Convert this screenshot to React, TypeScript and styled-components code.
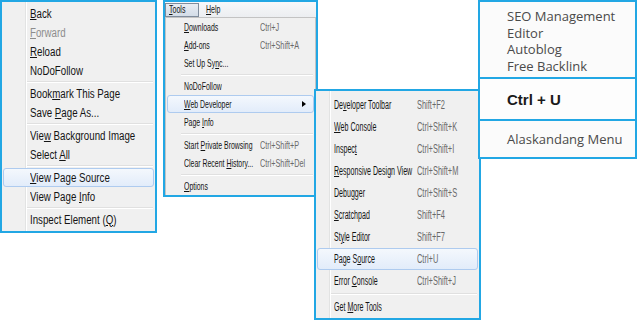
import React from 'react';
import styled, { createGlobalStyle, css } from 'styled-components';

const BLUE = '#22a7e4';

const Global = createGlobalStyle`
  html, body { margin: 0; padding: 0; background: #fff; }
  body { font-family: "Liberation Sans", Arial, sans-serif; }
`;

const Canvas = styled.div`
  position: relative;
  width: 639px;
  height: 321px;
  overflow: hidden;
  background: #fff;
`;

const Window = styled.div<{ $x: number; $y: number; $w: number; $h: number }>`
  position: absolute;
  left: ${(p) => p.$x}px;
  top: ${(p) => p.$y}px;
  width: ${(p) => p.$w}px;
  height: ${(p) => p.$h}px;
  box-sizing: border-box;
  border: 2px solid ${BLUE};
  display: flex;
  flex-direction: column;
`;

const MenuWindow = styled(Window)<{ $gutter: number; $padTop: number }>`
  padding-top: ${(p) => p.$padTop}px;
  background: linear-gradient(
      to right,
      transparent ${(p) => p.$gutter}px,
      #e2e3e3 ${(p) => p.$gutter}px,
      #e2e3e3 ${(p) => p.$gutter + 1}px,
      #ffffff ${(p) => p.$gutter + 1}px,
      #ffffff ${(p) => p.$gutter + 2}px,
      transparent ${(p) => p.$gutter + 2}px
    ),
    #f0f0f0;
`;

const ToolsWindow = styled(Window)`
  background: #f0f0f0;
`;

const MenuBar = styled.div`
  flex: none;
  height: 15px;
  display: flex;
  align-items: center;
  gap: 3px;
  background: linear-gradient(#f7f8fa, #eceef1);
`;

const MenuTitle = styled.span<{ $active?: boolean }>`
  display: inline-flex;
  align-items: center;
  box-sizing: border-box;
  height: 14px;
  padding: 0 3px;
  border: 1px solid transparent;
  ${(p) =>
    p.$active &&
    css`
      border-color: #7f8c9c;
      background: linear-gradient(#e8edf3, #d3dce7);
    `}
`;

const Dropdown = styled.div`
  flex: 1;
  display: flex;
  flex-direction: column;
  border: 1px solid #c3c3c3;
  border-bottom: none;
  background: #f0f0f0;
`;

const Row = styled.div<{ $h: number; $pad: number; $hl?: boolean }>`
  flex: none;
  height: ${(p) => p.$h}px;
  box-sizing: border-box;
  display: flex;
  align-items: center;
  margin: 0 1px;
  border: 1px solid transparent;
  border-radius: 3px;
  padding-left: ${(p) => p.$pad}px;
  color: #141414;
  ${(p) =>
    p.$hl &&
    css`
      border-color: #aecbef;
      background: linear-gradient(#f4f8fd, #e2ecfa);
    `}
`;

const Label = styled.span<{ $size: number; $sx: number; $w?: number; $muted?: boolean; $dim?: boolean }>`
  display: inline-block;
  flex: none;
  width: ${(p) => (p.$w ? `${p.$w}px` : 'auto')};
  font-size: ${(p) => p.$size}px;
  line-height: 1;
  white-space: nowrap;
  transform: scaleX(${(p) => p.$sx});
  transform-origin: left center;
  color: ${(p) => (p.$dim ? '#8d8d8d' : p.$muted ? '#6a6a6a' : '#141414')};
  u {
    text-underline-offset: 1px;
  }
`;

const Arrow = styled.span`
  margin-left: auto;
  margin-right: 7px;
  width: 0;
  height: 0;
  border-left: 4px solid #000;
  border-top: 3.5px solid transparent;
  border-bottom: 3.5px solid transparent;
`;

const Sep = styled.div<{ $left: number; $my: number }>`
  flex: none;
  height: 0;
  border-top: 1px solid #e0e0e0;
  border-bottom: 1px solid #ffffff;
  margin: ${(p) => p.$my}px 2px ${(p) => p.$my}px ${(p) => p.$left}px;
`;

const QuickPanel = styled(Window)`
  background: #fbfbfb;
`;

const LinkList = styled.div`
  flex: none;
  height: 77px;
  box-sizing: border-box;
  padding: 6px 0 0 27px;
  border-bottom: 2px solid ${BLUE};
  font-family: "Open Sans", "Noto Sans", sans-serif;
  font-size: 13px;
  line-height: 16.5px;
  color: #4a4a4a;
`;

const ShortcutBox = styled.div`
  flex: none;
  height: 42px;
  box-sizing: border-box;
  display: flex;
  align-items: center;
  padding-left: 27px;
  border-bottom: 2px solid ${BLUE};
  font-family: "Liberation Sans", Arial, sans-serif;
  font-weight: bold;
  font-size: 15px;
  color: #1a1a1a;
  background: #fdfdfd;
`;

const FooterItem = styled.div`
  flex: 1;
  display: flex;
  align-items: center;
  padding-left: 27px;
  font-family: "Open Sans", "Noto Sans", sans-serif;
  font-size: 13px;
  color: #4a4a4a;
`;

type Item = { t: string; k?: string; hl?: boolean; dim?: boolean; arrow?: boolean } | 'sep';

const Acc = ({ t }: { t: string }) => {
  const i = t.indexOf('&');
  if (i < 0) return <>{t}</>;
  return (
    <>
      {t.slice(0, i)}
      <u>{t[i + 1]}</u>
      {t.slice(i + 2)}
    </>
  );
};

const contextItems: Item[] = [
  { t: '&Back' },
  { t: '&Forward', dim: true },
  { t: '&Reload' },
  { t: 'NoDoFollow' },
  'sep',
  { t: 'Book&mark This Page' },
  { t: 'Save &Page As...' },
  'sep',
  { t: 'Vie&w Background Image' },
  { t: 'Select &All' },
  'sep',
  { t: '&View Page Source', hl: true },
  { t: 'View Page &Info' },
  'sep',
  { t: 'Inspect Element (&Q)' },
];

const toolsItems: Item[] = [
  { t: '&Downloads', k: 'Ctrl+J' },
  { t: '&Add-ons', k: 'Ctrl+Shift+A' },
  { t: 'Set Up Sy&nc...' },
  'sep',
  { t: 'NoDoFollow' },
  { t: '&Web Developer', hl: true, arrow: true },
  { t: 'Page &Info' },
  'sep',
  { t: 'Start &Private Browsing', k: 'Ctrl+Shift+P' },
  { t: 'Clear Recent &History...', k: 'Ctrl+Shift+Del' },
  'sep',
  { t: '&Options' },
];

const devItems: Item[] = [
  { t: 'De&veloper Toolbar', k: 'Shift+F2' },
  { t: '&Web Console', k: 'Ctrl+Shift+K' },
  { t: 'Inspec&t', k: 'Ctrl+Shift+I' },
  { t: '&Responsive Design View', k: 'Ctrl+Shift+M' },
  { t: 'Debugger', k: 'Ctrl+Shift+S' },
  { t: '&Scratchpad', k: 'Shift+F4' },
  { t: 'St&yle Editor', k: 'Shift+F7' },
  { t: 'Page S&ource', k: 'Ctrl+U', hl: true },
  { t: 'Error &Console', k: 'Ctrl+Shift+J' },
  'sep',
  { t: 'Get &More Tools' },
];

type Spec = { h: number; pad: number; size: number; sx: number; w: number; sepLeft: number; sepMy: number };

const renderItems = (items: Item[], s: Spec) =>
  items.map((it, i) =>
    it === 'sep' ? (
      <Sep key={i} $left={s.sepLeft} $my={s.sepMy} />
    ) : (
      <Row key={i} $h={s.h} $pad={s.pad} $hl={it.hl}>
        <Label $size={s.size} $sx={s.sx} $w={s.w} $dim={it.dim}>
          <Acc t={it.t} />
        </Label>
        {it.k && (
          <Label $size={s.size} $sx={s.sx + 0.03} $muted>
            {it.k}
          </Label>
        )}
        {it.arrow && <Arrow />}
      </Row>
    )
  );

export default function App() {
  return (
    <>
      <Global />
      <Canvas>
        <MenuWindow $x={0} $y={0} $w={157} $h={233} $gutter={23} $padTop={2}>
          {renderItems(contextItems, { h: 19, pad: 26, size: 12, sx: 0.81, w: 120, sepLeft: 25, sepMy: 1 })}
        </MenuWindow>

        <ToolsWindow $x={163} $y={0} $w={155} $h={197}>
          <MenuBar>
            <MenuTitle $active>
              <Label $size={11} $sx={0.64}>
                <Acc t="&Tools" />
              </Label>
            </MenuTitle>
            <MenuTitle>
              <Label $size={11} $sx={0.64}>
                <Acc t="&Help" />
              </Label>
            </MenuTitle>
          </MenuBar>
          <Dropdown>
            {renderItems(toolsItems, { h: 18, pad: 16, size: 11, sx: 0.63, w: 76, sepLeft: 15, sepMy: 1.5 })}
          </Dropdown>
        </ToolsWindow>

        <MenuWindow $x={314} $y={89} $w={167} $h={231} $gutter={13} $padTop={3}>
          {renderItems(devItems, { h: 22, pad: 16, size: 12, sx: 0.59, w: 83, sepLeft: 15, sepMy: 1 })}
        </MenuWindow>

        <QuickPanel $x={478} $y={0} $w={159} $h={159}>
          <LinkList>
            <div>SEO Management</div>
            <div>Editor</div>
            <div>Autoblog</div>
            <div>Free Backlink</div>
          </LinkList>
          <ShortcutBox>Ctrl + U</ShortcutBox>
          <FooterItem>Alaskandang Menu</FooterItem>
        </QuickPanel>
      </Canvas>
    </>
  );
}
